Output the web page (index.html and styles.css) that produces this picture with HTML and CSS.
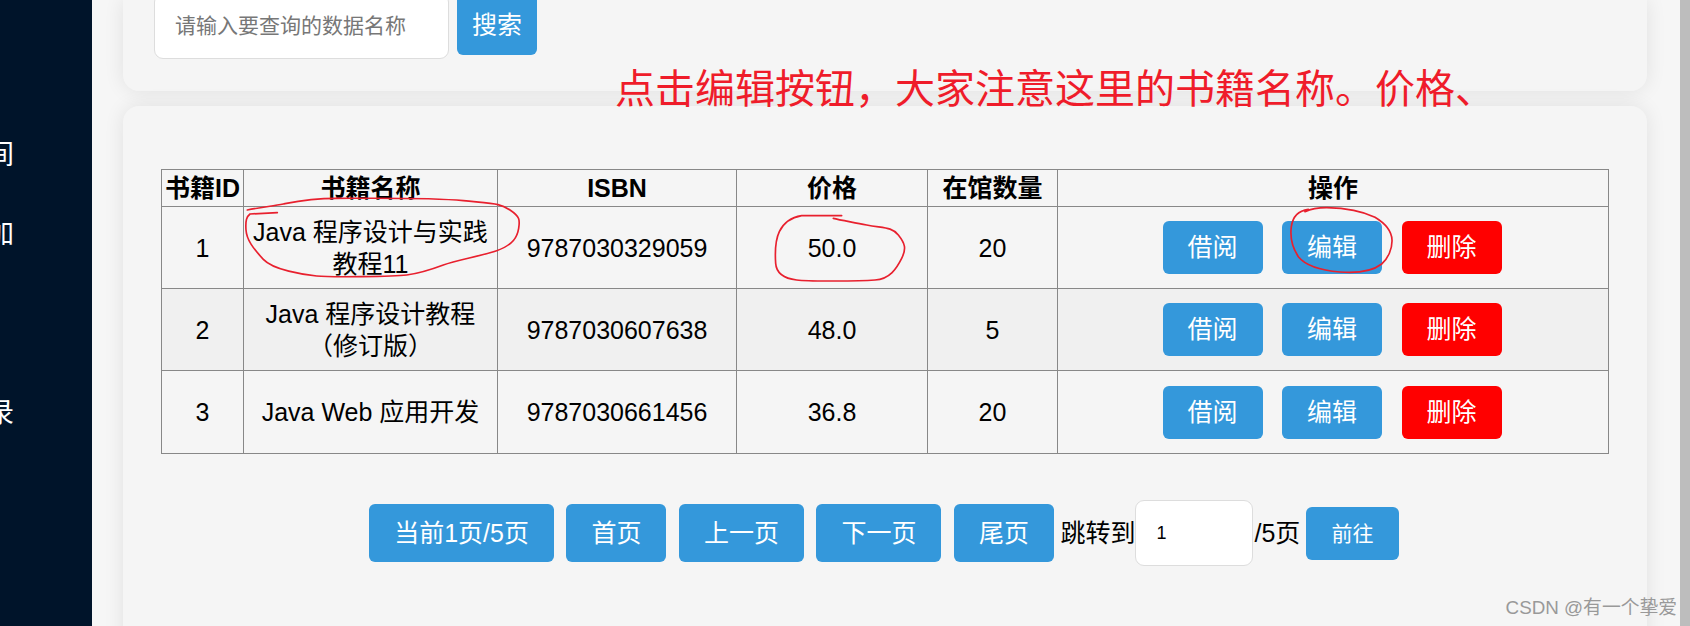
FILE: index.html
```html
<!DOCTYPE html>
<html lang="zh-CN">
<head>
<meta charset="utf-8">
<title>图书管理</title>
<link rel="stylesheet" href="styles.css">
</head>
<body>
<div class="page">
  <nav class="sidebar">
    <div class="nav-item">间</div>
    <div class="nav-item nav-next">加</div>
    <div class="nav-item nav-group">录</div>
  </nav>
  <main class="main">
    <section class="card card-search">
      <input class="search-input" type="text" placeholder="请输入要查询的数据名称">
      <button class="btn btn-search">搜索</button>
    </section>
    <section class="card card-list">
      <table class="books">
        <thead>
          <tr>
            <th class="col-id">书籍ID</th>
            <th class="col-name">书籍名称</th>
            <th class="col-isbn">ISBN</th>
            <th class="col-price">价格</th>
            <th class="col-count">在馆数量</th>
            <th class="col-ops">操作</th>
          </tr>
        </thead>
        <tbody>
          <tr>
            <td>1</td>
            <td>Java 程序设计与实践教程11</td>
            <td>9787030329059</td>
            <td>50.0</td>
            <td>20</td>
            <td><div class="ops"><button class="btn btn-op">借阅</button><button class="btn btn-op">编辑</button><button class="btn btn-op btn-danger">删除</button></div></td>
          </tr>
          <tr class="row-alt">
            <td>2</td>
            <td>Java 程序设计教程（修订版）</td>
            <td>9787030607638</td>
            <td>48.0</td>
            <td>5</td>
            <td><div class="ops"><button class="btn btn-op">借阅</button><button class="btn btn-op">编辑</button><button class="btn btn-op btn-danger">删除</button></div></td>
          </tr>
          <tr class="row-last">
            <td>3</td>
            <td>Java Web 应用开发</td>
            <td>9787030661456</td>
            <td>36.8</td>
            <td>20</td>
            <td><div class="ops"><button class="btn btn-op">借阅</button><button class="btn btn-op">编辑</button><button class="btn btn-op btn-danger">删除</button></div></td>
          </tr>
        </tbody>
      </table>
      <div class="pager">
        <button class="btn btn-page">当前1页/5页</button>
        <button class="btn btn-page">首页</button>
        <button class="btn btn-page">上一页</button>
        <button class="btn btn-page">下一页</button>
        <button class="btn btn-page">尾页</button>
        <span class="pager-text pager-jump">跳转到</span>
        <input class="page-input" type="text" value="1">
        <span class="pager-text">/5页</span>
        <button class="btn btn-go">前往</button>
      </div>
    </section>
  </main>
  <div class="scrollbar"></div>
  <p class="note">点击编辑按钮，大家注意这里的书籍名称。价格、</p>
  <svg class="ink" width="1690" height="626" viewBox="0 0 1690 626" aria-hidden="true">
    <g transform="translate(230 190) scale(.33333)">
      <path d="M52 60C90 52 130 48 160 42S240 25 320 25S600 22 700 32S810 40 840 60S870 90 866 115S850 165 800 182S680 210 640 225S570 250 530 255S300 262 260 258S130 240 100 208S50 150 48 120S50 80 60 72L142 68"/>
    </g>
    <g transform="translate(760 200) scale(.33333)">
      <path d="M245 47L125 47C95 52 70 70 58 95S45 160 47 190S70 235 110 240S300 243 345 240S410 205 425 175S435 130 415 105S370 85 320 75S240 60 220 55"/>
    </g>
    <g transform="translate(1260 190) scale(.33333)">
      <path d="M145 58C115 62 98 80 94 110C90 140 95 170 115 200C135 225 175 240 240 246C290 250 335 245 365 222C385 205 397 175 396 150C395 125 375 100 345 82C300 60 250 54 200 53C170 53 150 58 135 65"/>
    </g>
  </svg>
  <span class="watermark">CSDN @有一个挚爱</span>
</div>
</body>
</html>
```

FILE: styles.css
```css
* {
  box-sizing: border-box;
}

html,
body {
  margin: 0;
  height: 100%;
  overflow: hidden;
}

body {
  background: #f6f6f6;
  color: #000;
  font-family: "Liberation Sans", "Noto Sans CJK SC", sans-serif;
  font-size: 25px;
}

.page {
  position: relative;
  display: flex;
  height: 626px;
  overflow: hidden;
}

.sidebar {
  flex: 0 0 92px;
  background: #00142a;
  color: #fff;
  padding-top: 140px;
  overflow: hidden;
}

.nav-item {
  margin-left: -13px;
  font-size: 27px;
  line-height: 30px;
}

.nav-next {
  margin-top: 49px;
}

.nav-group {
  margin-top: 149px;
}

.main {
  flex: 1;
  min-width: 0;
  display: flex;
  flex-direction: column;
  gap: 15px;
  padding: 0 33px 0 31px;
}

.card {
  background: #f5f5f5;
  box-shadow: 0 0 20px rgba(0, 0, 0, 0.09);
  flex: none;
}

.card-search {
  height: 91px;
  display: flex;
  align-items: flex-end;
  padding: 0 0 32px 31px;
  border-radius: 0 0 16px 16px;
}

.search-input {
  flex: none;
  width: 295px;
  height: 66px;
  padding: 0 20px;
  background: #fff;
  border: 1px solid #ddd;
  border-radius: 9px;
  font: 21px "Liberation Sans", "Noto Sans CJK SC", sans-serif;
}

.search-input::placeholder {
  color: #777;
  opacity: 1;
}

.btn {
  border: 0;
  border-radius: 6px;
  background: #3498db;
  color: #fff;
  font: 25px/1 "Liberation Sans", "Noto Sans CJK SC", sans-serif;
  padding: 0 25px;
}

.btn-search {
  flex: none;
  width: 80px;
  height: 60px;
  padding: 0;
  margin: 0 0 4px 8px;
}

.card-list {
  height: 560px;
  padding: 63px 0 0 38px;
  border-radius: 16px;
}

.books {
  width: 1448px;
  table-layout: fixed;
  border-collapse: collapse;
  text-align: center;
}

.books th,
.books td {
  border: 1px solid #888;
  padding: 0;
  line-height: 32px;
}

.books th {
  height: 37px;
  font-weight: 700;
}

.books td {
  height: 82px;
}

.books .row-last td {
  height: 83px;
}

.row-alt {
  background: #f0f0f0;
}

.col-id {
  width: 82px;
}

.col-name {
  width: 254px;
}

.col-isbn {
  width: 239px;
}

.col-price {
  width: 191px;
}

.col-count {
  width: 130px;
}

.ops {
  display: flex;
  justify-content: center;
  gap: 19.5px;
  padding-right: 2px;
}

.btn-op {
  width: 100px;
  height: 53px;
  padding: 0;
}

.btn-danger {
  background: #f00;
}

.pager {
  width: 1448px;
  display: flex;
  align-items: center;
  justify-content: center;
  margin-top: 46px;
  height: 66px;
  padding-right: 2px;
}

.btn-page {
  height: 58px;
  margin-right: 12.5px;
}

.pager-text {
  line-height: 1;
}

.pager-jump {
  margin-left: -6px;
}

.page-input {
  width: 118px;
  height: 66px;
  padding: 0 20px;
  background: #fff;
  border: 1px solid #ddd;
  border-radius: 9px;
  margin-right: 1px;
  font: 18px "Liberation Sans", "Noto Sans CJK SC", sans-serif;
}

.btn-go {
  height: 53px;
  margin-left: 6px;
  padding: 0 25.25px;
  font-size: 21px;
}

.scrollbar {
  flex: 0 0 10px;
  background: #bdbdbd;
}

.note {
  position: absolute;
  left: 615px;
  top: 64px;
  margin: 0;
  color: #ef1c2a;
  font-size: 40px;
  line-height: 50px;
  white-space: nowrap;
}

.ink {
  position: absolute;
  left: 0;
  top: 0;
  pointer-events: none;
}

.ink path {
  fill: none;
  stroke: #e8202e;
  stroke-width: 5;
  stroke-linecap: round;
  stroke-linejoin: round;
}

.watermark {
  position: absolute;
  right: 13px;
  top: 596px;
  color: #999;
  font-size: 18.8px;
  line-height: 24px;
  white-space: nowrap;
}
```
